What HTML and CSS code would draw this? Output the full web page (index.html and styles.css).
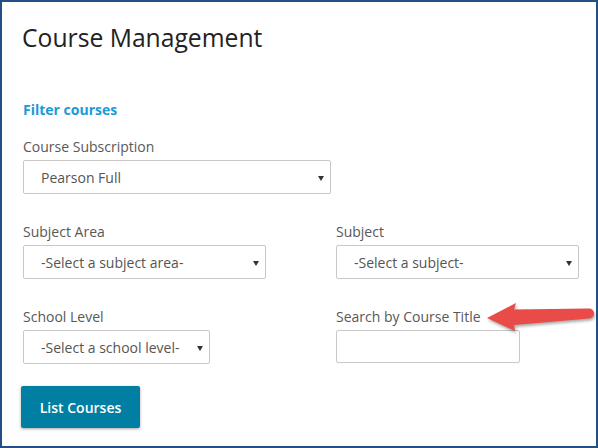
FILE: index.html
```html
<!DOCTYPE html>
<html>
<head>
<meta charset="utf-8">
<link rel="stylesheet" href="styles.css">
</head>
<body>
<div class="frame">
  <h1 class="title">Course Management</h1>
  <h2 class="section">Filter courses</h2>
  <div class="field first">
    <label class="label">Course Subscription</label>
    <div class="select w-sub"><span>Pearson Full</span></div>
  </div>
  <div class="grid">
    <div class="field">
      <label class="label">Subject Area</label>
      <div class="select w-area"><span>-Select a subject area-</span></div>
    </div>
    <div class="field">
      <label class="label">Subject</label>
      <div class="select w-subj"><span>-Select a subject-</span></div>
    </div>
    <div class="field">
      <label class="label">School Level</label>
      <div class="select w-level"><span>-Select a school level-</span></div>
    </div>
    <div class="field">
      <label class="label">Search by Course Title</label>
      <div class="input"></div>
    </div>
  </div>
  <button class="btn">List Courses</button>
  <svg class="callout" width="118" height="44" viewBox="480 296 118 44">
    <path d="M487,318 L516,303 L514,309.5 L589,308.5 A5,5 0 0 1 589,318.5 L514,325 L515,331 Z" fill="#e84b48"/>
  </svg>
</div>
</body>
</html>
```

FILE: styles.css
```css
html, body {
  margin: 0;
  padding: 0;
  background: #ffffff;
}
body {
  font-family: "Open Sans", "Liberation Sans", sans-serif;
}
.frame {
  position: relative;
  width: 598px;
  height: 448px;
  box-sizing: border-box;
  border: 2px solid #234e86;
  padding: 20px 0 0 21px;
  display: flex;
  flex-direction: column;
  align-items: flex-start;
}
.title {
  margin: 0 0 0 -1px;
  font-size: 24.7px;
  line-height: 32px;
  font-weight: 400;
  color: #222222;
}
.section {
  margin: 46px 0 0 0;
  font-size: 14px;
  line-height: 20px;
  font-weight: 700;
  color: #1a9ad6;
}
.field {
  display: flex;
  flex-direction: column;
  align-items: flex-start;
}
.field.first {
  margin-top: 16px;
}
.label {
  font-size: 14px;
  line-height: 20px;
  color: #585858;
  padding-top: 1px;
  margin-bottom: 3px;
}
.select {
  position: relative;
  box-sizing: border-box;
  height: 34px;
  border: 1px solid #c8c8c8;
  border-radius: 2px;
  padding-left: 17px;
  display: flex;
  align-items: center;
  font-size: 14px;
  color: #555555;
  background: #fff;
}
.select::after {
  content: "";
  position: absolute;
  right: 6px;
  top: 15px;
  border-left: 3px solid transparent;
  border-right: 3px solid transparent;
  border-top: 5px solid #333333;
}
.w-sub { width: 308px; }
.w-area { width: 243px; }
.w-subj { width: 243px; }
.w-level { width: 187px; }
.input {
  box-sizing: border-box;
  width: 184px;
  height: 33px;
  border: 1px solid #c8c8c8;
  border-radius: 2px;
  background: #fff;
}
.grid {
  margin-top: 27px;
  display: grid;
  grid-template-columns: 313px 250px;
  row-gap: 27px;
}
.btn {
  margin: 22px 0 0 -2px;
  width: 119px;
  height: 42px;
  border: none;
  border-radius: 2px;
  background: #017fa2;
  color: #ffffff;
  font-family: "Open Sans", "Liberation Sans", sans-serif;
  font-size: 14px;
  font-weight: 600;
  box-shadow: 0 1px 3px rgba(0,0,0,0.35);
  padding: 0;
}
.callout {
  position: absolute;
  left: 478px;
  top: 294px;
  filter: drop-shadow(1px 2px 1.5px rgba(0,0,0,0.35));
}
```
